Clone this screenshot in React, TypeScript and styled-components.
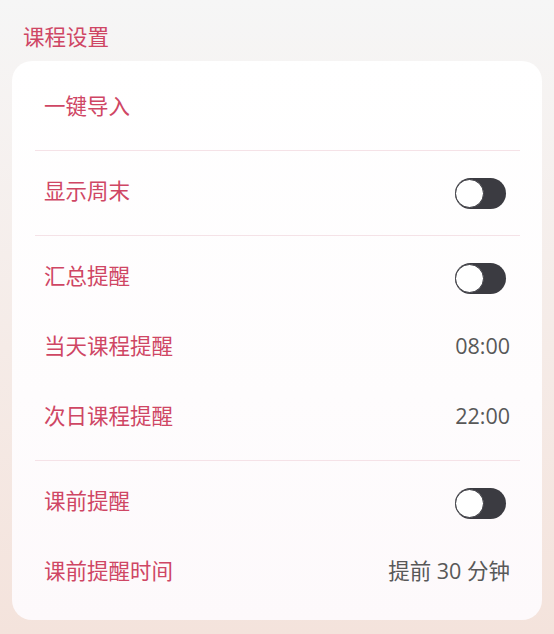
import { useState } from "react";
import styled, { createGlobalStyle } from "styled-components";

const GlobalStyle = createGlobalStyle`
  html, body, #root {
    margin: 0;
    height: 100%;
  }
  body {
    font-family: "Open Sans", "Noto Sans CJK SC", sans-serif;
    background: linear-gradient(180deg, #f6f6f6 0%, #f5ebe7 55%, #f4e3dc 100%);
  }
`;

const Page = styled.div`
  box-sizing: border-box;
  height: 100%;
  padding: 22px 12px 0;
`;

const SectionTitle = styled.div`
  font-size: 21.5px;
  line-height: 29px;
  color: #cf4664;
  padding-left: 11px;
  margin-bottom: 10px;
`;

const Card = styled.div`
  background: linear-gradient(180deg, #ffffff 0%, #fefcfd 60%, #fdf9fb 100%);
  border-radius: 20px;
  padding: 12px 0;
`;

const Divider = styled.div`
  height: 1px;
  margin: 7px 22px 7px 23px;
  background: #f5e2e7;
`;

const Row = styled.div`
  height: 70px;
  display: flex;
  align-items: center;
  justify-content: space-between;
  padding: 0 32px;
`;

const Label = styled.span`
  font-size: 21.5px;
  line-height: 30px;
  padding-bottom: 4px;
  color: #cf4664;
`;

const Value = styled.span`
  font-size: 21.5px;
  line-height: 30px;
  padding-bottom: 4px;
  color: #585858;
`;

const Track = styled.button<{ $on: boolean }>`
  position: relative;
  width: 51px;
  height: 31px;
  border: none;
  padding: 0;
  margin-right: 4px;
  border-radius: 16px;
  background: ${(p) => (p.$on ? "#cf4664" : "#3b3b41")};
  cursor: pointer;
`;

const Knob = styled.span<{ $on: boolean }>`
  position: absolute;
  top: 1px;
  left: ${(p) => (p.$on ? "21px" : "0")};
  width: 29px;
  height: 29px;
  box-sizing: border-box;
  border-radius: 50%;
  background: #ffffff;
  border: 1.5px solid #3b3b41;
`;

function Toggle() {
  const [on, setOn] = useState(false);
  return (
    <Track $on={on} onClick={() => setOn(!on)}>
      <Knob $on={on} />
    </Track>
  );
}

export default function App() {
  return (
    <>
      <GlobalStyle />
      <Page>
        <SectionTitle>课程设置</SectionTitle>
        <Card>
          <Row>
            <Label>一键导入</Label>
          </Row>
          <Divider />
          <Row>
            <Label>显示周末</Label>
            <Toggle />
          </Row>
          <Divider />
          <Row>
            <Label>汇总提醒</Label>
            <Toggle />
          </Row>
          <Row>
            <Label>当天课程提醒</Label>
            <Value>08:00</Value>
          </Row>
          <Row>
            <Label>次日课程提醒</Label>
            <Value>22:00</Value>
          </Row>
          <Divider />
          <Row>
            <Label>课前提醒</Label>
            <Toggle />
          </Row>
          <Row>
            <Label>课前提醒时间</Label>
            <Value>提前 30 分钟</Value>
          </Row>
        </Card>
      </Page>
    </>
  );
}
